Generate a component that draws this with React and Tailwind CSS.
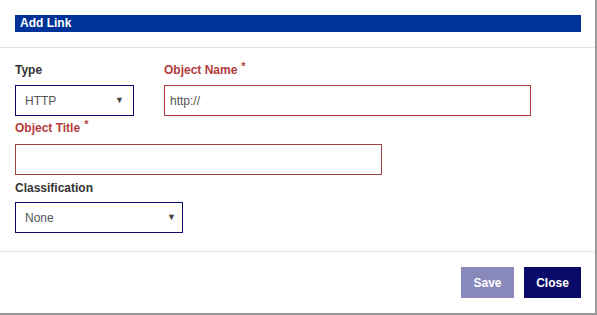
export default function App() {
  return (
    <div className="w-[597px] h-[315px] bg-white border-r-2 border-b-2 border-[#9a9a9a] font-['Liberation_Sans',Arial,sans-serif] flex flex-col overflow-hidden">
      {/* Header */}
      <div className="h-[48px] border-b border-[#e2e2e2] pt-[15px] pl-[15px] pr-[14px]">
        <div className="h-[17px] bg-[#003399] text-white text-[12px] font-bold leading-[17px] pl-[5px]">Add Link</div>
      </div>

      {/* Body */}
      <div className="h-[204px] border-b border-[#e2e2e2] px-[15px] pt-[15px]">
        <div className="grid grid-cols-[119px_367px] gap-x-[30px]">
          <div className="text-[12px] font-bold text-[#333] h-[22px] leading-[14px]">Type</div>
          <div className="text-[12px] font-bold text-[#b23b3b] h-[22px] leading-[14px]">
            Object Name<span className="ml-[4px] text-[11px] relative -top-[4px]">*</span>
          </div>
          <div className="h-[31px] border border-[#0a0a6b] flex items-center justify-between pl-[9px] pr-[9px] text-[12px] text-[#555]">
            <span>HTTP</span>
            <span className="text-[9px] text-[#444]">▼</span>
          </div>
          <div className="h-[31px] border border-[#b03a3a] flex items-center pl-[5px] text-[12px] text-[#555]">http://</div>
        </div>
        <div className="mt-[5px] text-[12px] font-bold text-[#b23b3b] h-[23px] leading-[14px]">
          Object Title<span className="ml-[4px] text-[11px] relative -top-[4px]">*</span>
        </div>
        <div className="w-[367px] h-[31px] border border-[#9a4040]"></div>
        <div className="mt-[6px] text-[12px] font-bold text-[#333] h-[21px] leading-[14px]">Classification</div>
        <div className="w-[168px] h-[31px] border border-[#0a0a6b] flex items-center justify-between pl-[9px] pr-[6px] text-[12px] text-[#555]">
          <span>None</span>
          <span className="text-[9px] text-[#444]">▼</span>
        </div>
      </div>

      {/* Footer */}
      <div className="flex justify-end gap-[10px] pt-[15px] pr-[14px]">
        <button className="w-[53px] h-[31px] bg-[#8888bb] text-white text-[12px] font-bold">Save</button>
        <button className="w-[57px] h-[31px] bg-[#0a0a6b] text-white text-[12px] font-bold">Close</button>
      </div>
    </div>
  );
}
